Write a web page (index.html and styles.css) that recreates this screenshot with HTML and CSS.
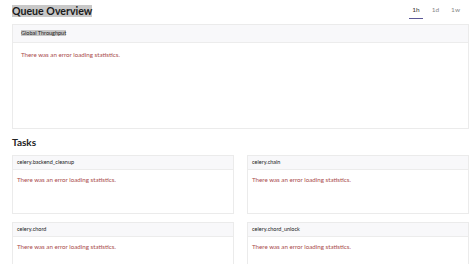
FILE: index.html
```html
<!DOCTYPE html>
<html>
<head>
<meta charset="utf-8">
<link rel="stylesheet" href="styles.css">
</head>
<body>
<div class="page">
  <div class="topbar">
    <h1 class="title"><span class="hl">Queue Overview</span></h1>
    <div class="tabs">
      <span class="tab active">1h</span>
      <span class="tab">1d</span>
      <span class="tab">1w</span>
    </div>
  </div>
  <div class="card global">
    <div class="card-head"><span class="hl">Global Throughput</span></div>
    <div class="card-body"><p class="error">There was an error loading statistics.</p></div>
  </div>
  <h2 class="section">Tasks</h2>
  <div class="grid">
    <div class="card task">
      <div class="card-head">celery.backend_cleanup</div>
      <div class="card-body"><p class="error">There was an error loading statistics.</p></div>
    </div>
    <div class="card task">
      <div class="card-head">celery.chain</div>
      <div class="card-body"><p class="error">There was an error loading statistics.</p></div>
    </div>
    <div class="card task">
      <div class="card-head">celery.chord</div>
      <div class="card-body"><p class="error">There was an error loading statistics.</p></div>
    </div>
    <div class="card task">
      <div class="card-head">celery.chord_unlock</div>
      <div class="card-body"><p class="error">There was an error loading statistics.</p></div>
    </div>
  </div>
</div>
</body>
</html>
```

FILE: styles.css
```css
html, body {
  margin: 0;
  padding: 0;
  background: #ffffff;
  font-family: Lato, "Open Sans", sans-serif;
  color: #222;
  overflow: hidden;
}
.page {
  padding: 4px 5px 0 12px;
}
.topbar {
  display: flex;
  justify-content: space-between;
  align-items: flex-start;
  height: 20px;
}
.title {
  margin: 0;
  font-size: 10.6px;
  line-height: 14px;
  font-weight: 700;
  color: #1a1a1a;
}
.hl {
  background: #c8c8c8;
}
.tabs {
  display: flex;
  gap: 6px;
  margin-right: 6px;
  margin-top: 1px;
}
.tab {
  font-size: 6.5px;
  line-height: 9px;
  color: #888;
  padding: 0 3px 4px;
  border-bottom: 1.5px solid transparent;
  min-width: 7px;
  text-align: center;
}
.tab.active {
  color: #333;
  border-bottom-color: #5b5796;
}
.card {
  border: 1px solid #ebebeb;
  background: #fff;
  box-sizing: border-box;
}
.card-head {
  background: #f8f8fa;
  border-bottom: 1px solid #ececec;
  font-size: 5.5px;
  color: #222;
}
.global .card-head {
  line-height: 17px;
  padding-left: 8px;
  box-sizing: border-box;
  height: 18px;
}
.global .card-body {
  height: 85px;
  padding: 8px 8px 0;
  box-sizing: border-box;
}
.error {
  margin: 0;
  font-size: 6.2px;
  line-height: 8px;
  color: #a94a4a;
}
.section {
  margin: 7px 0 7px;
  font-size: 10px;
  line-height: 12px;
  font-weight: 700;
  color: #222;
}
.grid {
  display: grid;
  grid-template-columns: 1fr 1fr;
  column-gap: 13px;
  row-gap: 8px;
}
.task .card-head {
  height: 14px;
  line-height: 13px;
  padding-left: 4px;
  box-sizing: border-box;
}
.task .card-body {
  height: 43px;
  padding: 6px 4px 0;
  box-sizing: border-box;
}
```
